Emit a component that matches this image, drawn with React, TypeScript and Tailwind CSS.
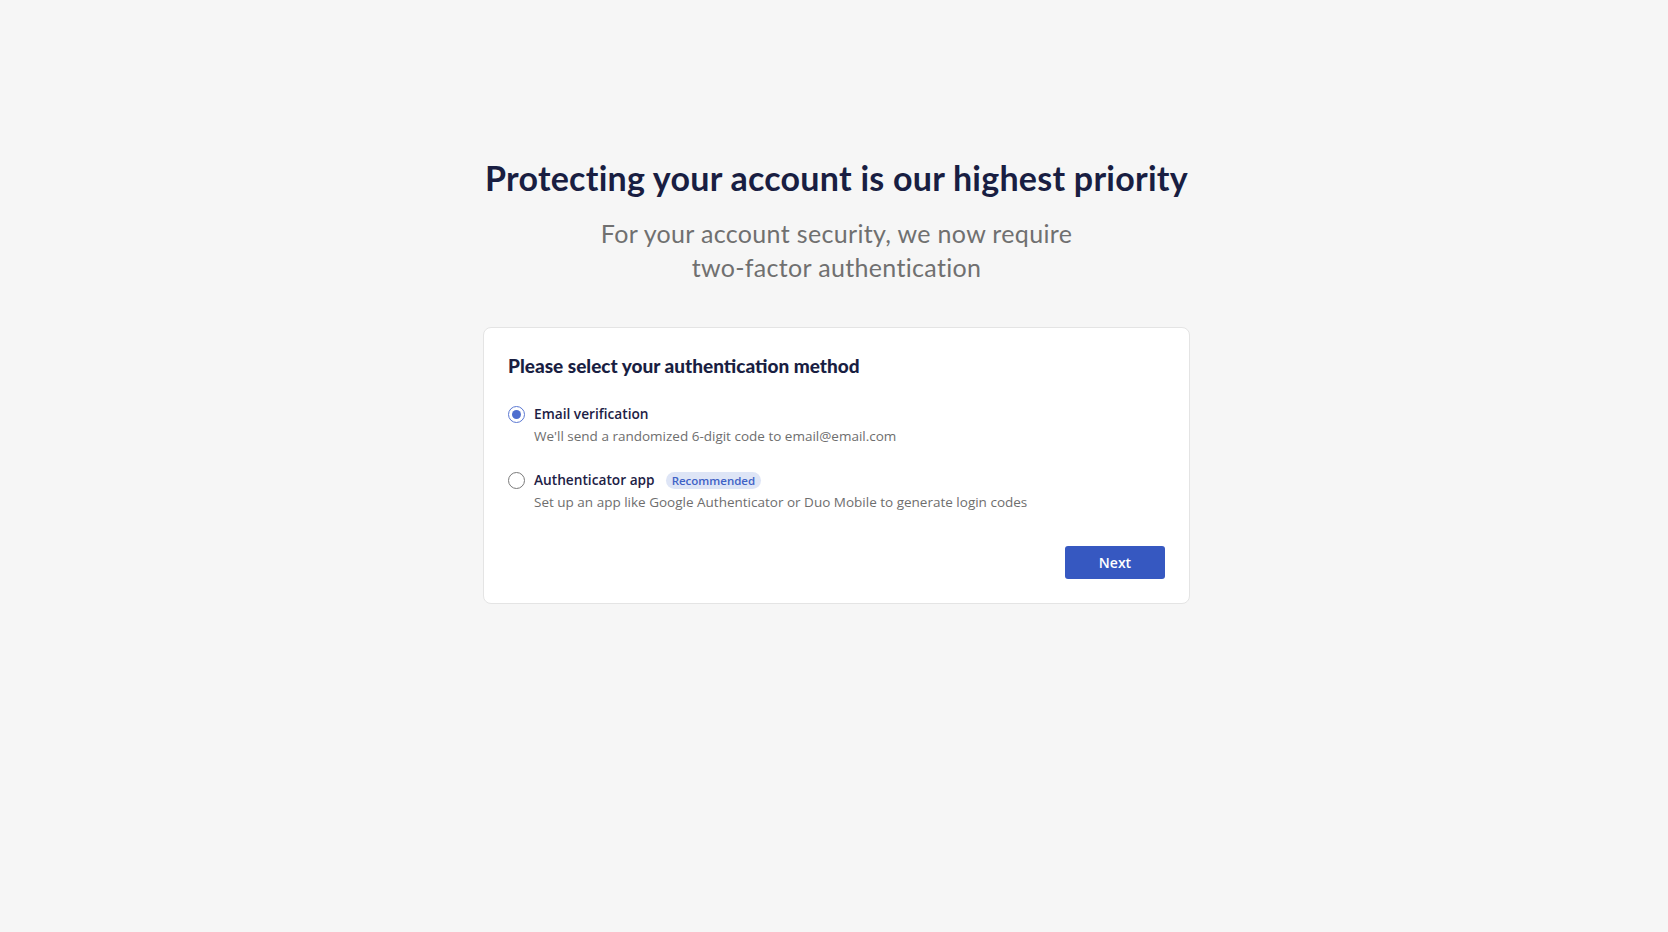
import React, { useState } from "react";

const heading = { fontFamily: "Lato, 'Noto Sans', sans-serif" };
const body = { fontFamily: "'Open Sans', 'Noto Sans', sans-serif" };

function Radio({ checked }: { checked: boolean }) {
  return checked ? (
    <span className="flex h-[17px] w-[17px] shrink-0 items-center justify-center rounded-full border-[1.5px] border-[#5b78d2] bg-white">
      <span className="h-[9px] w-[9px] rounded-full bg-[#4f6fcf]" />
    </span>
  ) : (
    <span className="h-[17px] w-[17px] shrink-0 rounded-full border-[1.5px] border-[#7a7a7a] bg-white" />
  );
}

export default function App() {
  const [sel, setSel] = useState("email");
  return (
    <div className="min-h-[932px] w-full bg-[#f6f6f6] pt-[157px] pl-[5px]" style={body}>
      <div className="flex flex-col items-center">
        <h1
          className="text-[34px] leading-[42px] font-bold text-[#191e42] tracking-[0.25px]"
          style={heading}
        >
          Protecting your account is our highest priority
        </h1>
        <p
          className="mt-[17px] text-center text-[25px] leading-[34px] text-[#707070] tracking-[0.33px]"
          style={heading}
        >
          For your account security, we now require
          <br />
          two-factor authentication
        </p>
        <div className="mt-[43px] w-[707px] rounded-[8px] border border-[#e4e4e4] bg-white px-6 pt-6 pb-6">
          <h2
            className="text-[19px] leading-[28px] font-black text-[#191e42]"
            style={heading}
          >
            Please select your authentication method
          </h2>
          <div className="mt-[23px] flex flex-col gap-[22px]">
            <label className="flex cursor-pointer flex-col" onClick={() => setSel("email")}>
              <div className="flex h-[22px] items-center gap-[9px]">
                <Radio checked={sel === "email"} />
                <span className="text-[13.7px] font-semibold text-[#1d2145]">Email verification</span>
              </div>
              <div className="ml-[26px] text-[13.5px] leading-[22px] text-[#6e6e6e]">
                We'll send a randomized 6-digit code to email@email.com
              </div>
            </label>
            <label className="flex cursor-pointer flex-col" onClick={() => setSel("app")}>
              <div className="flex h-[22px] items-center gap-[9px]">
                <Radio checked={sel === "app"} />
                <span className="text-[13.7px] font-semibold text-[#1d2145]">Authenticator app</span>
                <span className="ml-[2px] rounded-full bg-[#dee5f6] px-[6px] text-[11.5px] leading-[17px] font-semibold text-[#4062c6]">
                  Recommended
                </span>
              </div>
              <div className="ml-[26px] text-[13.5px] leading-[22px] text-[#6e6e6e]">
                Set up an app like Google Authenticator or Duo Mobile to generate login codes
              </div>
            </label>
          </div>
          <div className="mt-[33px] flex justify-end">
            <button className="h-[33px] w-[100px] rounded-[3px] bg-[#3658c1] text-[14px] font-semibold text-white">
              Next
            </button>
          </div>
        </div>
      </div>
    </div>
  );
}
